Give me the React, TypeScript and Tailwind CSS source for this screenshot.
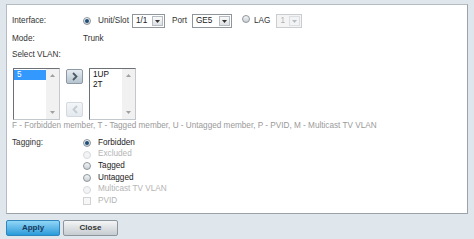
import React from 'react';

const font = { fontFamily: '"Liberation Sans", Arial, sans-serif' };

function Radio({ checked = false, disabled = false }: { checked?: boolean; disabled?: boolean }) {
  return (
    <span
      className={`relative inline-flex w-[8px] h-[8px] rounded-full border items-center justify-center ${
        disabled
          ? 'border-[#d6d9dc] bg-[#f3f4f5]'
          : 'border-[#8d959c] bg-gradient-to-b from-[#f4f6f8] to-[#c9cfd4]'
      }`}
    >
      {checked && <span className="w-[4px] h-[4px] rounded-full bg-[#1f4e79]" />}
    </span>
  );
}

function Select({ value, width, disabled = false }: { value: string; width: string; disabled?: boolean }) {
  return (
    <div
      className={`flex h-[14px] ${width} border ${
        disabled ? 'border-[#c9cdd1] bg-[#f4f4f4] text-[#b0b0b0]' : 'border-[#8e969c] bg-white text-[#222]'
      }`}
    >
      <span className="flex-1 pl-[3px] leading-[12px]">{value}</span>
      <span
        className={`w-[11px] my-[1px] mr-[1px] flex items-center justify-center border ${
          disabled ? 'border-[#dcdfe2] bg-[#f2f3f4]' : 'border-[#b6bcc1] bg-gradient-to-b from-[#fafafa] to-[#dde1e4]'
        }`}
      >
        <svg width="5" height="3" viewBox="0 0 5 3">
          <path d="M0 0h5L2.5 3z" fill={disabled ? '#b8bcc0' : '#333'} />
        </svg>
      </span>
    </div>
  );
}

function ListBox({ items, selected }: { items: string[]; selected?: string }) {
  return (
    <div className="flex w-[47px] h-[52px] bg-white border border-t-[#6b7176] border-l-[#6b7176] border-r-[#c3c8cc] border-b-[#c3c8cc]">
      <div className="flex-1 flex flex-col pt-[1px]">
        {items.map(it => (
          <div
            key={it}
            className={`h-[10px] leading-[10px] pl-[3px] ${it === selected ? 'bg-[#3399ff] text-white' : 'text-[#111]'}`}
          >
            {it}
          </div>
        ))}
      </div>
      <div className="w-[13px] bg-[#f1f1f1] flex flex-col items-center justify-between py-[5px]">
        <svg width="5" height="3" viewBox="0 0 5 3">
          <path d="M0 3h5L2.5 0z" fill="#a0a0a0" />
        </svg>
        <svg width="5" height="3" viewBox="0 0 5 3">
          <path d="M0 0h5L2.5 3z" fill="#a0a0a0" />
        </svg>
      </div>
    </div>
  );
}

function ArrowBtn({ dir, disabled = false }: { dir: 'right' | 'left'; disabled?: boolean }) {
  return (
    <div
      className={`w-[17px] h-[15px] flex items-center justify-center border rounded-[2px] ${
        disabled
          ? 'border-[#d3d9de] bg-gradient-to-b from-[#f3f6f8] to-[#e3e9ee]'
          : 'border-[#8c99a4] bg-gradient-to-b from-[#e6ecf1] to-[#b5c3ce]'
      }`}
    >
      <svg width="6" height="9" viewBox="0 0 6 9">
        <path
          d={dir === 'right' ? 'M1 1l3.5 3.5L1 8' : 'M5 1L1.5 4.5 5 8'}
          fill="none"
          stroke={disabled ? '#c4ccd3' : '#4c5a66'}
          strokeWidth="1.8"
        />
      </svg>
    </div>
  );
}

const tagging = [
  { label: 'Forbidden', checked: true },
  { label: 'Excluded', disabled: true },
  { label: 'Tagged' },
  { label: 'Untagged' },
  { label: 'Multicast TV VLAN', disabled: true },
];

export default function App() {
  return (
    <div className="w-[474px] h-[239px] bg-[#dfe7ed] pt-[4px] pl-[6px] text-[8.2px] text-[#333]" style={font}>
      <div className="w-[462px] h-[210px] bg-white border border-[#b4bcc3] border-r-[#9aa3aa] border-b-[#9aa3aa] pl-[5px] pt-[9px]">
        {/* Interface */}
        <div className="flex items-center h-[14px]">
          <span className="w-[71px]">Interface:</span>
          <Radio checked />
          <span className="ml-[7px] mr-[3px]">Unit/Slot</span>
          <Select value="1/1" width="w-[33px]" />
          <span className="ml-[7px] mr-[5px]">Port</span>
          <Select value="GE5" width="w-[40px]" />
          <span className="ml-[10px]">
            <Radio />
          </span>
          <span className="ml-[4px] mr-[6px]">LAG</span>
          <Select value="1" width="w-[26px]" disabled />
        </div>

        {/* Mode */}
        <div className="flex items-center h-[12px] mt-[5px]">
          <span className="w-[71px]">Mode:</span>
          <span>Trunk</span>
        </div>

        <div className="flex items-center h-[12px] mt-[4px]">Select VLAN:</div>

        {/* VLAN lists */}
        <div className="flex mt-[7px] pl-[1px]">
          <ListBox items={['5']} selected="5" />
          <div className="flex flex-col justify-between ml-[6px] mr-[6px] pt-[1px] pb-[3px]">
            <ArrowBtn dir="right" />
            <ArrowBtn dir="left" disabled />
          </div>
          <ListBox items={['1UP', '2T']} />
        </div>

        <div className="h-[12px] leading-[12px] text-[#9a9a9a]">
          F - Forbidden member, T - Tagged member, U - Untagged member, P - PVID, M - Multicast TV VLAN
        </div>

        {/* Tagging */}
        <div className="flex mt-[5px]">
          <span className="w-[71px] h-[11.7px] leading-[11.7px]">Tagging:</span>
          <div className="flex flex-col">
            {tagging.map(t => (
              <div key={t.label} className="flex items-center h-[11.7px]">
                <Radio checked={t.checked} disabled={t.disabled} />
                <span className={`ml-[7px] ${t.disabled ? 'text-[#b4b4b4]' : 'text-[#222]'}`}>{t.label}</span>
              </div>
            ))}
            <div className="flex items-center h-[11.7px]">
              <span className="w-[8px] h-[8px] border border-[#cfd3d6] bg-[#f7f7f7]" />
              <span className="ml-[7px] text-[#b4b4b4]">PVID</span>
            </div>
          </div>
        </div>
      </div>

      {/* Buttons */}
      <div className="flex gap-[3px] mt-[6px]">
        <button className="w-[54px] h-[16px] rounded-[2px] border border-[#2f86bd] bg-gradient-to-b from-[#8fd6f7] to-[#249bd9] text-[8px] font-bold text-[#163a5c] leading-[14px]">
          Apply
        </button>
        <button className="w-[55px] h-[16px] rounded-[2px] border border-[#8d969c] bg-gradient-to-b from-[#f4f5f6] to-[#c6ccd1] text-[8px] font-bold text-[#333] leading-[14px]">
          Close
        </button>
      </div>
    </div>
  );
}
